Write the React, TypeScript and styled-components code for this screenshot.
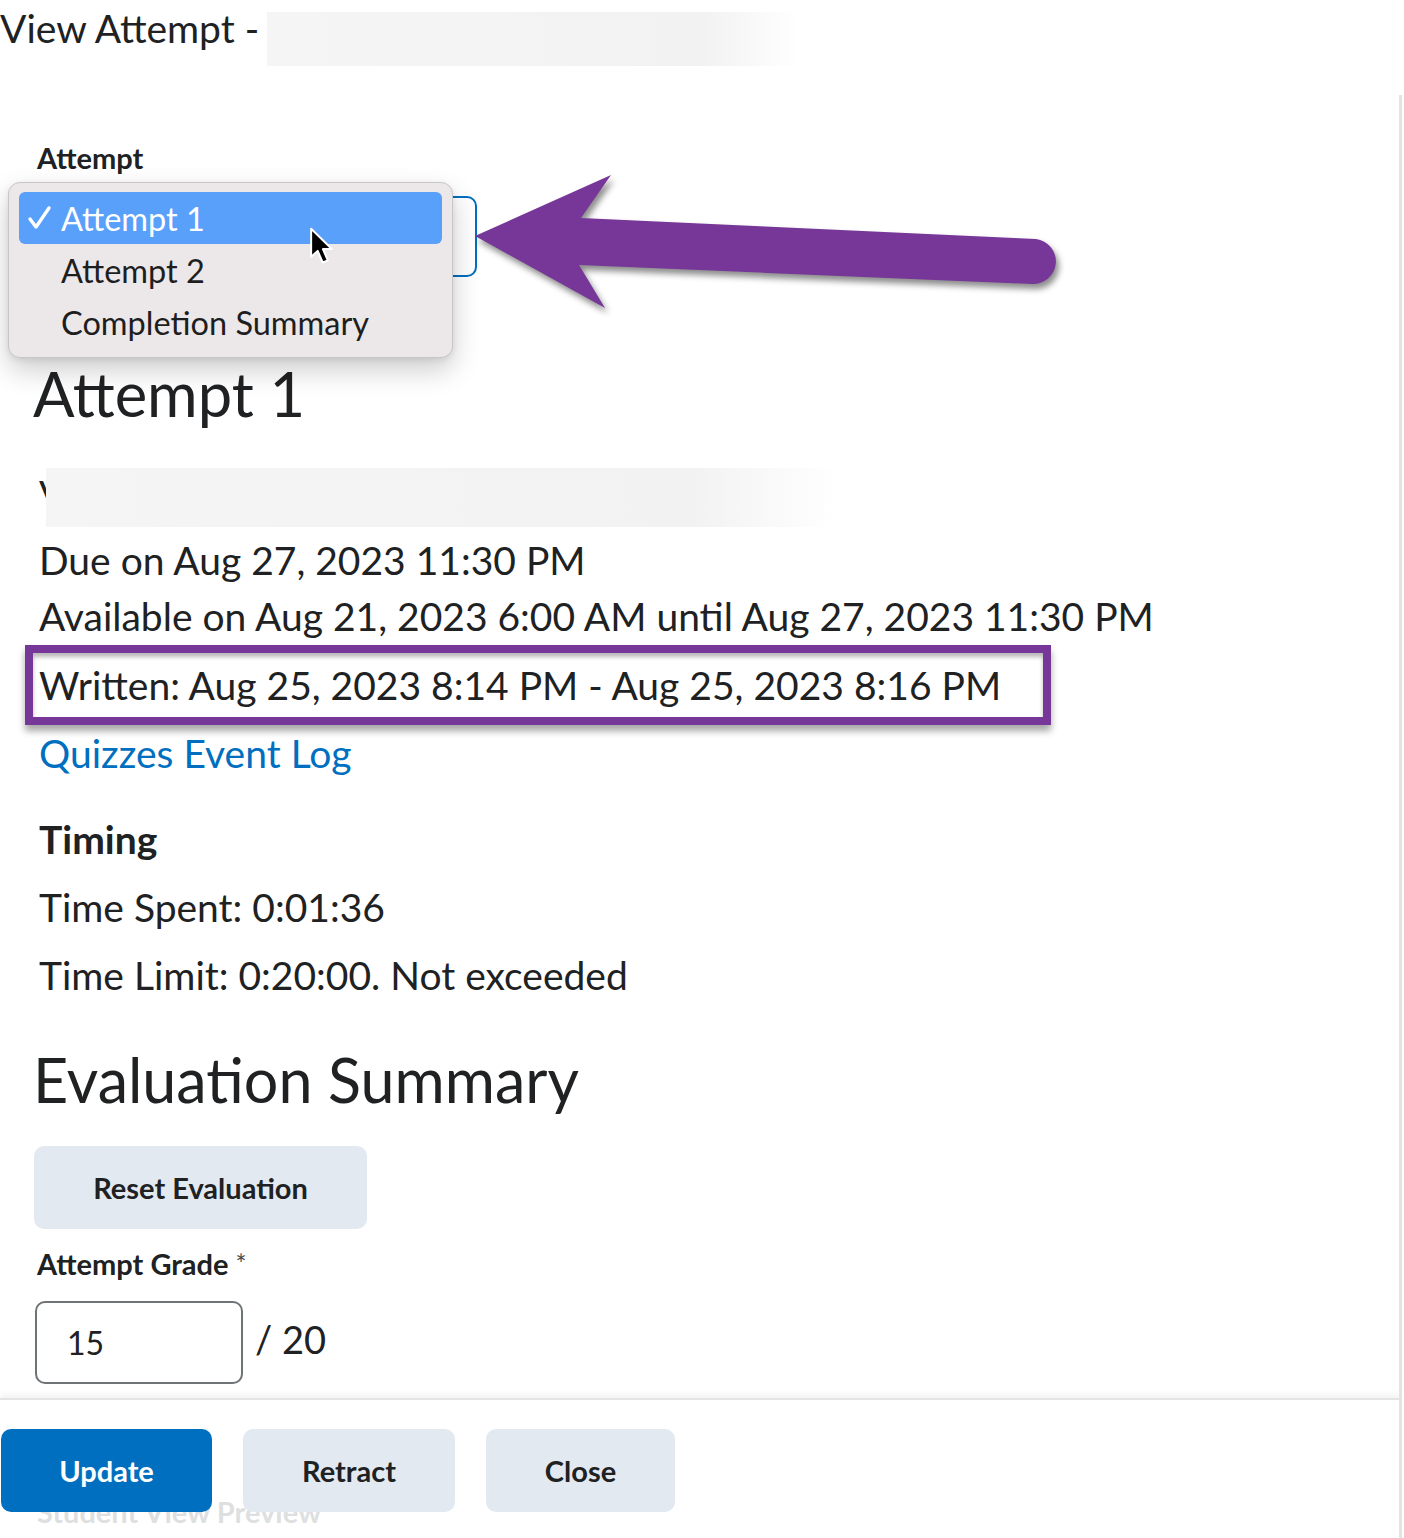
import React from 'react';
import styled, { createGlobalStyle } from 'styled-components';

const GlobalStyle = createGlobalStyle`
  html, body {
    margin: 0;
    padding: 0;
    background: #ffffff;
  }
  body {
    font-family: Lato, "Noto Sans", sans-serif;
    color: #202122;
  }
`;

const Page = styled.div`
  position: relative;
  width: 1404px;
  height: 1538px;
  overflow: hidden;
  background: #ffffff;

  &::after {
    content: '';
    position: absolute;
    top: 95px;
    bottom: 0;
    left: 1399px;
    width: 3px;
    background: #e3e3e3;
  }
`;

const Header = styled.header`
  display: flex;
  align-items: flex-start;
  height: 66px;
`;

const Title = styled.h1`
  margin: 0;
  font-size: 39px;
  font-weight: 400;
  line-height: 56px;
  white-space: nowrap;
`;

const Redacted = styled.div<{ $w: number; $h: number; $top?: number; $left?: number }>`
  flex: none;
  width: ${({ $w }) => $w}px;
  height: ${({ $h }) => $h}px;
  margin-top: ${({ $top }) => $top ?? 0}px;
  margin-left: ${({ $left }) => $left ?? 0}px;
  background: linear-gradient(90deg, #f5f5f5 0%, #f2f2f2 82%, rgba(255, 255, 255, 0) 100%);
`;

const Content = styled.main`
  padding-left: 35px;
`;

const Label = styled.div<{ $top: number }>`
  margin-top: ${({ $top }) => $top}px;
  padding-left: 2px;
  height: 36px;
  font-size: 29px;
  font-weight: 700;
  line-height: 36px;
`;

const Required = styled.span`
  margin-left: 7px;
  font-size: 26px;
  font-weight: 400;
  color: #494c4e;
  vertical-align: 1px;
`;

const SelectWrap = styled.div`
  position: relative;
  margin: 20px 0 0 2px;
  width: 440px;
`;

const SelectBox = styled.div`
  box-sizing: border-box;
  height: 81px;
  border: 2px solid #006fbf;
  border-radius: 10px;
  background: #ffffff;
`;

const Menu = styled.ul`
  position: absolute;
  left: -29px;
  top: -14px;
  box-sizing: border-box;
  width: 445px;
  height: 176px;
  margin: 0;
  padding: 9px 10px;
  list-style: none;
  background: #ece8ea;
  border: 1px solid #c9c6c8;
  border-radius: 12px;
  box-shadow: 0 12px 28px rgba(0, 0, 0, 0.2), 0 2px 6px rgba(0, 0, 0, 0.08);
  z-index: 2;
`;

const MenuItem = styled.li<{ $active?: boolean }>`
  display: flex;
  align-items: center;
  height: 52px;
  padding-left: 42px;
  position: relative;
  border-radius: 6px;
  font-size: 32.5px;
  color: ${({ $active }) => ($active ? '#ffffff' : '#1e1e1e')};
  background: ${({ $active }) => ($active ? '#58a0fa' : 'transparent')};
`;

const Check = styled.svg`
  position: absolute;
  left: 8px;
  top: 13px;
`;

const Cursor = styled.svg`
  position: absolute;
  left: 300px;
  top: 44px;
  z-index: 3;
`;

const Heading = styled.h2<{ $top: number; $size?: number }>`
  margin: ${({ $top }) => $top}px 0 0 -2px;
  font-size: ${({ $size }) => $size ?? 61.5}px;
  font-weight: 400;
  line-height: 80px;
`;

const BlurRow = styled.div`
  display: flex;
  align-items: flex-start;
  margin-top: 35px;
`;

const Clip = styled.span`
  display: block;
  box-sizing: border-box;
  width: 11px;
  padding-left: 4px;
  overflow: hidden;
  font-size: 39px;
  line-height: 52px;
`;

const Line = styled.div<{ $top?: number }>`
  margin-top: ${({ $top }) => $top ?? 0}px;
  padding-left: 4px;
  font-size: 39px;
  line-height: 56px;
  white-space: nowrap;
`;

const Highlight = styled.div`
  box-sizing: border-box;
  width: 1026px;
  height: 80px;
  margin: 1px 0 0 -10px;
  padding-left: 6px;
  border: 8px solid #773798;
  font-size: 39px;
  line-height: 64px;
  white-space: nowrap;
  box-shadow: 0 6px 7px rgba(0, 0, 0, 0.35), inset 0 4px 4px rgba(0, 0, 0, 0.28);
`;

const LinkText = styled.a`
  display: block;
  padding-left: 4px;
  font-size: 39px;
  line-height: 56px;
  color: #006fbf;
  text-decoration: none;
`;

const SubHeading = styled.div<{ $top: number }>`
  margin-top: ${({ $top }) => $top}px;
  padding-left: 4px;
  font-size: 39px;
  font-weight: 700;
  line-height: 56px;
`;

const Button = styled.button<{ $primary?: boolean; $w: number }>`
  box-sizing: border-box;
  width: ${({ $w }) => $w}px;
  height: 83px;
  padding: 0;
  border: none;
  border-radius: 10px;
  font-family: Lato, "Noto Sans", sans-serif;
  font-size: 29px;
  font-weight: 700;
  color: ${({ $primary }) => ($primary ? '#ffffff' : '#202122')};
  background: ${({ $primary }) => ($primary ? '#006fbf' : '#e3e9f1')};
  position: relative;
  z-index: 1;
`;

const ResetButton = styled(Button)`
  margin: 26px 0 0 -1px;
`;

const GradeRow = styled.div`
  display: flex;
  align-items: center;
  gap: 12px;
  margin-top: 19px;
`;

const GradeInput = styled.div`
  box-sizing: border-box;
  width: 208px;
  height: 83px;
  padding-left: 30px;
  display: flex;
  align-items: center;
  border: 2px solid #6e7376;
  border-radius: 10px;
  font-size: 32px;
`;

const OutOf = styled.span`
  font-size: 38px;
  margin-top: -8px;
`;

const Footer = styled.footer`
  position: relative;
  margin-top: 14px;
  width: 1400px;
  height: 141px;
  box-sizing: border-box;
  padding: 29px 0 0 1px;
  border-top: 2px solid #e2e4e6;
  box-shadow: 0 -4px 6px rgba(0, 0, 0, 0.05);
  display: flex;
  gap: 31px;
  align-items: flex-start;
`;

const Ghost = styled.span`
  position: absolute;
  left: 37px;
  top: 92px;
  font-size: 29px;
  font-weight: 700;
  line-height: 40px;
  color: #dedfe1;
  white-space: nowrap;
`;

const Annotation = styled.svg`
  position: absolute;
  left: 460px;
  top: 160px;
  filter: drop-shadow(3px 5px 3px rgba(0, 0, 0, 0.45));
  z-index: 4;
`;

export default function App() {
  return (
    <Page>
      <GlobalStyle />
      <Header>
        <Title>View Attempt -</Title>
        <Redacted $w={532} $h={54} $top={12} $left={8} />
      </Header>

      <Content>
        <Label $top={74}>Attempt</Label>
        <SelectWrap>
          <SelectBox />
          <Menu>
            <MenuItem $active>
              <Check width="26" height="26" viewBox="0 0 26 26">
                <polyline points="3,14 9,22 22,3" fill="none" stroke="#ffffff" strokeWidth="3.4" strokeLinecap="round" strokeLinejoin="round" />
              </Check>
              Attempt 1
            </MenuItem>
            <MenuItem>Attempt 2</MenuItem>
            <MenuItem>Completion Summary</MenuItem>
            <Cursor width="26" height="38" viewBox="0 0 14 21">
              <path d="M1 1 L1 16.5 L4.6 13.2 L7.4 19.6 L10.2 18.4 L7.5 12.2 L12.4 12.2 Z" fill="#000000" stroke="#ffffff" strokeWidth="1.1" strokeLinejoin="round" />
            </Cursor>
          </Menu>
        </SelectWrap>

        <Heading $top={76}>Attempt 1</Heading>

        <BlurRow>
          <Clip>V</Clip>
          <Redacted $w={790} $h={59} />
        </BlurRow>

        <Line $top={5}>Due on Aug 27, 2023 11:30 PM</Line>
        <Line>Available on Aug 21, 2023 6:00 AM until Aug 27, 2023 11:30 PM</Line>
        <Highlight>Written: Aug 25, 2023 8:14 PM - Aug 25, 2023 8:16 PM</Highlight>
        <LinkText href="#">Quizzes Event Log</LinkText>

        <SubHeading $top={30}>Timing</SubHeading>
        <Line $top={12}>Time Spent: 0:01:36</Line>
        <Line $top={12}>Time Limit: 0:20:00. Not exceeded</Line>

        <Heading $top={37} $size={61}>Evaluation Summary</Heading>
        <ResetButton $w={333}>Reset Evaluation</ResetButton>

        <Label $top={17}>
          Attempt Grade<Required>*</Required>
        </Label>
        <GradeRow>
          <GradeInput>15</GradeInput>
          <OutOf>/ 20</OutOf>
        </GradeRow>
      </Content>

      <Footer>
        <Button $primary $w={211}>Update</Button>
        <Button $w={212}>Retract</Button>
        <Button $w={189}>Close</Button>
        <Ghost>Student View Preview</Ghost>
      </Footer>

      <Annotation width="620" height="170" viewBox="0 0 620 170">
        <path
          d="M15 76 L151 15 L121 58 L576 79 A22.6 22.6 0 0 1 572 124 L119 105 L145 148 Z"
          fill="#773798"
        />
      </Annotation>
    </Page>
  );
}
